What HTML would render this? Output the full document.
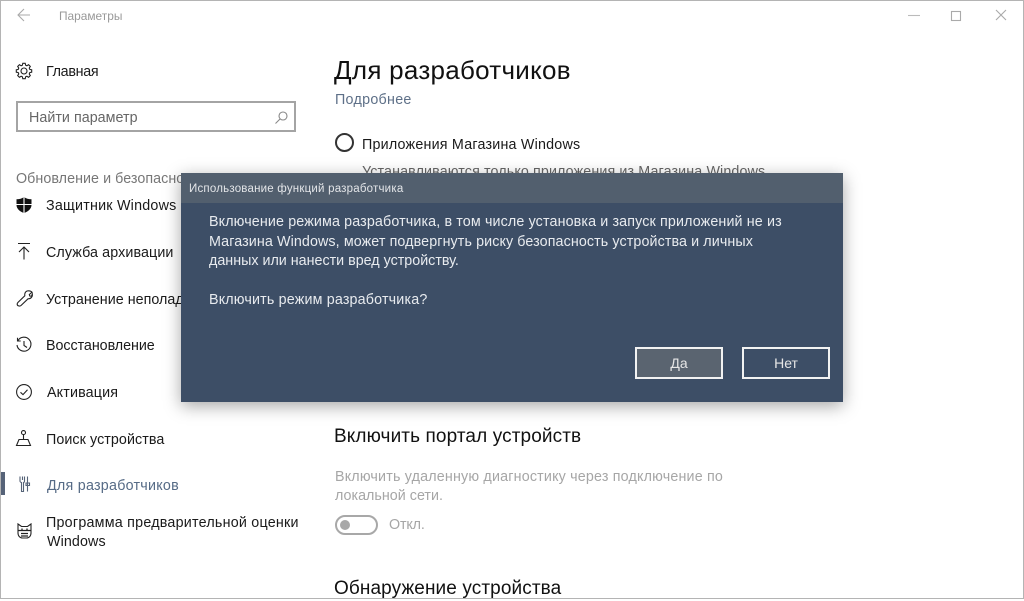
<!DOCTYPE html>
<html lang="ru"><head><meta charset="utf-8"><title>Параметры</title>
<style>
html,body{margin:0;padding:0;background:#fff}
body{width:1024px;height:599px;position:relative;overflow:hidden;font-family:"Liberation Sans","DejaVu Sans",sans-serif;color:#1a1a1a}
#all{position:absolute;left:0;top:0;width:1024px;height:599px;filter:blur(.35px)}
.t{position:absolute;white-space:nowrap;font-size:14.3px;line-height:20px;height:20px;margin-top:1px}
.n{margin-top:0}
svg{position:absolute;overflow:visible;fill:none;stroke:#222;stroke-width:1.1}
#dlg{position:absolute;left:181px;top:173px;width:662px;height:229px;background:#3d4e66;box-shadow:0 4px 16px rgba(0,0,0,.35)}
#bar{position:absolute;left:0;top:0;width:662px;height:30px;background:#525f6e}
.b{position:absolute;box-sizing:border-box;top:174px;width:88px;height:32px;border:2px solid #f2f2f2;color:#e6e6e6;font-size:14px;line-height:28px;text-align:center}
.w{color:#e8ebef}
</style></head><body><div id="all">
<div style="position:absolute;left:0;top:0;width:1022px;height:597px;border:1px solid #b4b4b4"></div>

<svg style="left:17px;top:8px" width="14" height="14" viewBox="0 0 14 14"><path d="M1 7H13M7 1L1 7L7 13" stroke="#aaa"/></svg>
<div class="t n" style="left:59px;top:6px;font-size:11.9px;color:#999">Параметры</div>
<svg style="left:908px;top:15px" width="12" height="2"><path d="M0 .5H12" stroke="#bbb"/></svg>
<svg style="left:951px;top:11px" width="10" height="10"><rect x=".5" y=".5" width="9" height="9" stroke="#aaa"/></svg>
<svg style="left:996px;top:10px" width="10" height="10"><path d="M0 0L10 10M10 0L0 10" stroke="#aaa"/></svg>

<svg style="left:16px;top:63px" width="16" height="16" viewBox="0 0 16 16"><g transform="translate(8 8)"><path d="M5.77-1.65L7.7-1.22V1.22L5.77 1.65L5.25 2.91L6.31 4.58L4.58 6.31L2.91 5.25L1.65 5.77L1.22 7.7H-1.22L-1.65 5.77L-2.91 5.25L-4.58 6.31L-6.31 4.58L-5.25 2.91L-5.77 1.65L-7.7 1.22V-1.22L-5.77-1.65L-5.25-2.91L-6.31-4.58L-4.58-6.31L-2.91-5.25L-1.65-5.77L-1.22-7.7H1.22L1.65-5.77L2.91-5.25L4.58-6.31L6.31-4.58L5.25-2.91Z"/><circle r="3"/></g></svg>
<div class="t" style="left:46px;top:61px;letter-spacing:-.3px">Главная</div>

<div style="position:absolute;box-sizing:border-box;left:16px;top:101px;width:280px;height:31px;border:2px solid #a4a4a4"></div>
<div class="t" style="left:29px;top:107px;color:#666;letter-spacing:.03px">Найти параметр</div>
<svg style="left:275px;top:111px" width="13" height="13" viewBox="0 0 13 13"><circle cx="8" cy="5" r="4" stroke="#888"/><path d="M5 8L.5 12.5" stroke="#888"/></svg>

<div class="t" style="left:16px;top:168px;color:#777;letter-spacing:.05px">Обновление и безопасность</div>

<svg style="left:16px;top:197px" width="16" height="16" viewBox="0 0 15 16"><path d="M7.5 0C5.5 1.6 3 2.3 0 2.3V8C0 11.5 3 14.5 7.5 16C12 14.5 15 11.5 15 8V2.3C12 2.3 9.5 1.6 7.5 0Z" fill="#111" stroke="none"/><path d="M7.5 0V16M0 7.5H15" stroke="#fff"/></svg>
<div class="t" style="left:46px;top:195px;letter-spacing:.22px">Защитник Windows</div>

<svg style="left:17px;top:243px" width="14" height="17" viewBox="0 0 14 17"><path d="M1 .5H13M7 16.5V4M2 9L7 4L12 9"/></svg>
<div class="t" style="left:46px;top:242px;letter-spacing:.1px">Служба архивации</div>

<svg style="left:16px;top:290px" width="17" height="17" viewBox="0 0 17 17"><path d="M11 1C13 .5 15 1.2 16 2.2L13.3 4.5L13.8 6L15.5 6.3L16.3 4C16.8 6.5 15 9 12 8.8L5 15.5C3.8 16.6 1 16 1.2 14C1.2 13.2 1.6 12.8 2 12.4L8.8 5.8C8.5 3.6 9.3 1.8 11 1Z"/></svg>
<div class="t" style="left:46px;top:289px;letter-spacing:.03px">Устранение неполадок</div>

<svg style="left:16px;top:337px" width="16" height="16" viewBox="0 0 16 16"><path d="M2 3.5A7 7 0 1 1 1 8M1.5 .8V4H4.7M8 4V8.5L11 10.5"/></svg>
<div class="t" style="left:46px;top:335px;letter-spacing:-.05px">Восстановление</div>

<svg style="left:16px;top:384px" width="16" height="16" viewBox="0 0 16 16"><circle cx="8" cy="8" r="7.4"/><path d="M4.5 8.3L7 10.6L11.5 5.7"/></svg>
<div class="t" style="left:47px;top:382px;letter-spacing:.15px">Активация</div>

<svg style="left:16px;top:430px" width="15" height="17" viewBox="0 0 15 17"><circle cx="7.5" cy="2.6" r="2"/><path d="M7.5 4.6V9M.5 15.5H14.5L12 9.5H3L.5 15.5Z"/></svg>
<div class="t" style="left:46px;top:429px;letter-spacing:.07px">Поиск устройства</div>

<div style="position:absolute;left:1px;top:472px;width:4px;height:23px;background:#566378"></div>
<svg style="left:19px;top:476px" width="11" height="17" viewBox="0 0 11 17"><path d="M1 .5V5C1 6 2 6.5 2.5 6.5V15.5H4.5V6.5C5 6.5 5.5 6 5.5 5V.5M3.5 .5V4M8.5 .5V15.5M7 7H10.5V9.5H7Z" stroke="#566378"/></svg>
<div class="t" style="left:47px;top:475px;color:#566b86;letter-spacing:.25px">Для разработчиков</div>

<svg style="left:17px;top:523px" width="15" height="16" viewBox="0 0 15 16"><path d="M1 1L4.5 3.5H10.5L14 1V10C14 13 12 15 9.5 15H5.5C3 15 1 13 1 10Z"/><path d="M1 7.5H14M4 10.5H11M5 5.5V7M10 5.5V7M4 13H11" stroke-width="1.3"/></svg>
<div class="t" style="left:46px;top:512px;letter-spacing:.23px">Программа предварительной оценки</div>
<div class="t" style="left:47px;top:531px;letter-spacing:.1px">Windows</div>

<div class="t n" style="left:334px;top:54px;height:32px;line-height:32px;font-size:26px;color:#111;letter-spacing:.27px">Для разработчиков</div>
<div class="t" style="left:335px;top:89px;color:#5e7088;letter-spacing:.28px">Подробнее</div>

<div style="position:absolute;box-sizing:border-box;left:335px;top:133px;width:19px;height:19px;border:2px solid #333;border-radius:50%"></div>
<div class="t" style="left:362px;top:134px;letter-spacing:.21px">Приложения Магазина Windows</div>
<div class="t" style="left:362px;top:161px;color:#666;letter-spacing:.12px">Устанавливаются только приложения из Магазина Windows.</div>

<div class="t n" style="left:334px;top:425px;height:24px;line-height:24px;font-size:19px;color:#111;letter-spacing:.11px">Включить портал устройств</div>
<div class="t" style="left:335px;top:466px;color:#a6a6a6;letter-spacing:.18px">Включить удаленную диагностику через подключение по</div>
<div class="t" style="left:335px;top:485px;color:#a6a6a6;letter-spacing:.02px">локальной сети.</div>
<div style="position:absolute;box-sizing:border-box;left:335px;top:515px;width:43px;height:20px;border:2px solid #a8a8a8;border-radius:10px"></div>
<div style="position:absolute;left:340px;top:520px;width:10px;height:10px;background:#a8a8a8;border-radius:50%"></div>
<div class="t" style="left:389px;top:514px;color:#a6a6a6;letter-spacing:-.15px">Откл.</div>
<div class="t n" style="left:334px;top:577px;height:24px;line-height:24px;font-size:19px;color:#111;letter-spacing:.11px">Обнаружение устройства</div>

<div id="dlg">
<div id="bar"></div>
<div class="t n" style="left:8px;top:6px;font-size:11.5px;color:#e3e5e8;letter-spacing:.21px">Использование функций разработчика</div>
<div class="t w" style="left:28px;top:38px;letter-spacing:.13px">Включение режима разработчика, в том числе установка и запуск приложений не из</div>
<div class="t w" style="left:28px;top:58px;letter-spacing:.1px">Магазина Windows, может подвергнуть риску безопасность устройства и личных</div>
<div class="t w" style="left:28px;top:77px;letter-spacing:0">данных или нанести вред устройству.</div>
<div class="t w" style="left:28px;top:116px;letter-spacing:.17px">Включить режим разработчика?</div>
<div class="b" style="left:454px;background:#5a6470">Да</div>
<div class="b" style="left:561px">Нет</div>
</div>
</div></body></html>
